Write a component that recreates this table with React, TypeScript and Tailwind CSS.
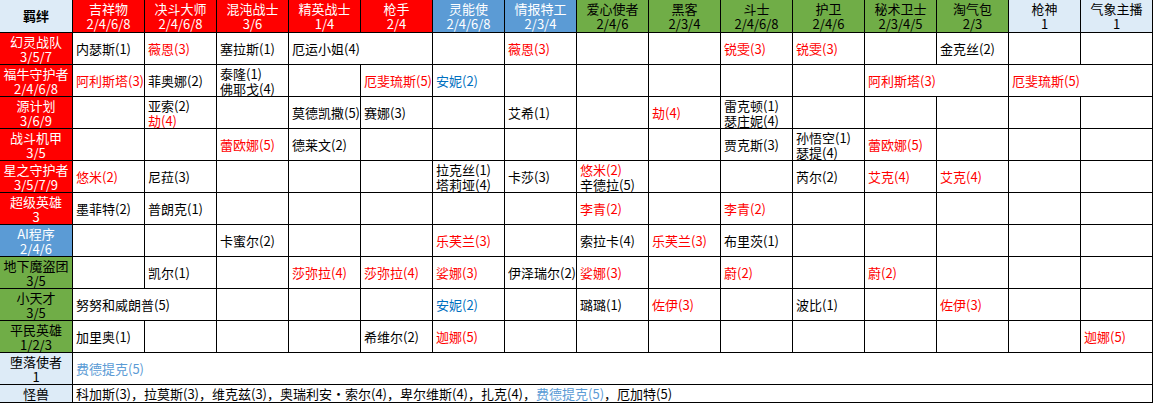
import React from "react";

// "!" = red text, "~" = blue text, "^" = light blue text, "|" = new line
type Row = {
  name: string;
  num?: string;
  bg: string;
  cells: Record<number, string>;
  spans?: Record<number, number>;
};

const headers: { name: string; num: string; bg: string }[] = [
  { name: "吉祥物", num: "2/4/6/8", bg: "red" },
  { name: "决斗大师", num: "2/4/6/8", bg: "red" },
  { name: "混沌战士", num: "3/6", bg: "red" },
  { name: "精英战士", num: "1/4", bg: "red" },
  { name: "枪手", num: "2/4", bg: "red" },
  { name: "灵能使", num: "2/4/6/8", bg: "blue" },
  { name: "情报特工", num: "2/3/4", bg: "blue" },
  { name: "爱心使者", num: "2/4/6", bg: "green" },
  { name: "黑客", num: "2/3/4", bg: "green" },
  { name: "斗士", num: "2/4/6/8", bg: "green" },
  { name: "护卫", num: "2/4/6", bg: "green" },
  { name: "秘术卫士", num: "2/3/4/5", bg: "green" },
  { name: "淘气包", num: "2/3", bg: "green" },
  { name: "枪神", num: "1", bg: "light" },
  { name: "气象主播", num: "1", bg: "light" },
];

const rows: Row[] = [
  {
    name: "幻灵战队",
    num: "3/5/7",
    bg: "red",
    cells: { 1: "内瑟斯(1)", 2: "!薇恩(3)", 3: "塞拉斯(1)", 4: "厄运小姐(4)", 7: "!薇恩(3)", 10: "!锐雯(3)", 11: "!锐雯(3)", 13: "金克丝(2)" },
    spans: { 4: 2 },
  },
  {
    name: "福牛守护者",
    num: "2/4/6/8",
    bg: "red",
    cells: { 1: "!阿利斯塔(3)", 2: "菲奥娜(2)", 3: "泰隆(1)|佛耶戈(4)", 5: "!厄斐琉斯(5)", 6: "~安妮(2)", 12: "!阿利斯塔(3)", 14: "!厄斐琉斯(5)" },
    spans: { 12: 2, 14: 2 },
  },
  {
    name: "源计划",
    num: "3/6/9",
    bg: "red",
    cells: { 2: "亚索(2)|!劫(4)", 4: "莫德凯撒(5)", 5: "赛娜(3)", 7: "艾希(1)", 9: "!劫(4)", 10: "雷克顿(1)|瑟庄妮(4)" },
  },
  {
    name: "战斗机甲",
    num: "3/5",
    bg: "red",
    cells: { 3: "!蕾欧娜(5)", 4: "德莱文(2)", 10: "贾克斯(3)", 11: "孙悟空(1)|瑟提(4)", 12: "!蕾欧娜(5)" },
  },
  {
    name: "星之守护者",
    num: "3/5/7/9",
    bg: "red",
    cells: { 1: "!悠米(2)", 2: "尼菈(3)", 6: "拉克丝(1)|塔莉垭(4)", 7: "卡莎(3)", 8: "!悠米(2)|辛德拉(5)", 11: "芮尔(2)", 12: "!艾克(4)", 13: "!艾克(4)" },
  },
  {
    name: "超级英雄",
    num: "3",
    bg: "red",
    cells: { 1: "墨菲特(2)", 2: "普朗克(1)", 8: "!李青(2)", 10: "!李青(2)" },
  },
  {
    name: "AI程序",
    num: "2/4/6",
    bg: "blue",
    cells: { 3: "卡蜜尔(2)", 6: "!乐芙兰(3)", 8: "索拉卡(4)", 9: "!乐芙兰(3)", 10: "布里茨(1)" },
  },
  {
    name: "地下魔盗团",
    num: "3/5",
    bg: "green",
    cells: { 2: "凯尔(1)", 4: "!莎弥拉(4)", 5: "!莎弥拉(4)", 6: "!娑娜(3)", 7: "伊泽瑞尔(2)", 8: "!娑娜(3)", 10: "!蔚(2)", 12: "!蔚(2)" },
  },
  {
    name: "小天才",
    num: "3/5",
    bg: "green",
    cells: { 1: "努努和威朗普(5)", 6: "~安妮(2)", 8: "璐璐(1)", 9: "!佐伊(3)", 11: "波比(1)", 13: "!佐伊(3)" },
    spans: { 1: 2 },
  },
  {
    name: "平民英雄",
    num: "1/2/3",
    bg: "green",
    cells: { 1: "加里奥(1)", 5: "希维尔(2)", 6: "!迦娜(5)", 15: "!迦娜(5)" },
  },
  {
    name: "堕落使者",
    num: "1",
    bg: "light",
    cells: { 1: "^费德提克(5)" },
    spans: { 1: 15 },
  },
];

const headBg: Record<string, string> = {
  red: "bg-[#ff0000] text-white",
  blue: "bg-[#5b9bd5] text-white",
  green: "bg-[#70ad47] text-black",
  light: "bg-[#ddebf7] text-black",
};

const spanCls: Record<number, string> = {
  1: "",
  2: "col-span-2",
  15: "col-span-15",
};

function Line({ text }: { text: string }) {
  let color = "text-black";
  let t = text;
  if (t.startsWith("!")) {
    color = "text-[#ff0000]";
    t = t.slice(1);
  } else if (t.startsWith("~")) {
    color = "text-[#0070c0]";
    t = t.slice(1);
  } else if (t.startsWith("^")) {
    color = "text-[#5b9bd5]";
    t = t.slice(1);
  }
  return <div className={color}>{t}</div>;
}

function DataCell({ value, span }: { value?: string; span: number }) {
  return (
    <div className={`${spanCls[span]} bg-white overflow-hidden whitespace-nowrap flex flex-col justify-center pl-[3px] leading-[15px]`}>
      {value ? value.split("|").map((l, i) => <Line key={i} text={l} />) : null}
    </div>
  );
}

function HeadCell({ name, num, bg }: { name: string; num?: string; bg: string }) {
  return (
    <div className={`${headBg[bg]} flex flex-col items-center justify-center overflow-hidden whitespace-nowrap leading-[15px]`}>
      <div>{name}</div>
      {num ? <div>{num}</div> : null}
    </div>
  );
}

export default function App() {
  return (
    <div className="w-[1153px] h-[403px] bg-white font-['Noto_Sans_CJK_SC',sans-serif] text-[13px]">
      <div className="grid grid-cols-[72px_repeat(15,71px)] grid-rows-[32px_repeat(11,31px)_17px] gap-px bg-black pr-px pb-px">
        <div className="bg-[#ddebf7] flex items-center justify-center font-bold text-black">羁绊</div>
        {headers.map((h) => (
          <HeadCell key={h.name} name={h.name} num={h.num} bg={h.bg} />
        ))}

        {rows.map((r) => {
          const out: React.ReactNode[] = [<HeadCell key="h" name={r.name} num={r.num} bg={r.bg} />];
          let c = 1;
          while (c <= 15) {
            const span = r.spans?.[c] ?? 1;
            out.push(<DataCell key={c} value={r.cells[c]} span={span} />);
            c += span;
          }
          return <React.Fragment key={r.name}>{out}</React.Fragment>;
        })}

        <HeadCell name="怪兽" bg="light" />
        <div className="col-span-15 bg-white overflow-hidden whitespace-nowrap flex items-center pl-[3px] leading-[15px] text-black">
          科加斯(3)，拉莫斯(3)，维克兹(3)，奥瑞利安・索尔(4)，卑尔维斯(4)，扎克(4)，
          <span className="text-[#5b9bd5]">费德提克(5)</span>，厄加特(5)
        </div>
      </div>
    </div>
  );
}
